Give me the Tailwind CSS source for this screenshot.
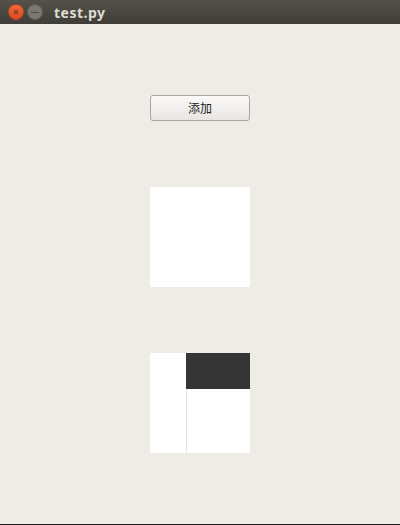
<!DOCTYPE html>
<html>
<head>
<meta charset="utf-8">
<script src="https://cdn.jsdelivr.net/npm/@tailwindcss/browser@4"></script>
</head>
<body class="w-[400px] h-[525px] overflow-hidden bg-[#efebe7] font-['Liberation_Sans','Noto_Sans_CJK_SC',sans-serif]">
<div class="flex flex-col h-[525px]">
  <header class="flex items-center h-6 shrink-0 bg-gradient-to-b from-[#545148] to-[#3e3d38] pl-2">
    <div class="flex items-center justify-center w-4 h-4 rounded-full bg-gradient-to-b from-[#f0683c] to-[#dc4a20] border border-[#8a3a1e]/60">
      <svg width="6" height="6" viewBox="0 0 6 6"><path d="M1 1L5 5M5 1L1 5" stroke="#7a3a22" stroke-width="1.1"/></svg>
    </div>
    <div class="flex items-center justify-center w-4 h-4 rounded-full bg-[#7a7870] border border-[#4a4944]/60 ml-[3px]">
      <div class="w-[8px] h-px bg-[#4a4944]"></div>
    </div>
    <span class="ml-[11px] text-[14px] font-bold text-[#dfdbd2] font-['Noto_Sans','Liberation_Sans',sans-serif] tracking-[0.5px]">test.py</span>
  </header>
  <main class="flex-1 flex flex-col items-center">
    <button class="mt-[71px] w-[100px] h-[26px] rounded-[3px] border border-[#aba69f] bg-gradient-to-b from-[#fbfaf9] to-[#e9e6e2] text-[12px] text-[#1c1c1c] flex items-center justify-center pt-px">添加</button>
    <div class="mt-[66px] w-[100px] h-[100px] bg-white"></div>
    <div class="mt-[66px] w-[100px] h-[100px] bg-white grid grid-cols-[36px_64px] grid-rows-[36px_64px]">
      <div></div>
      <div class="bg-[#353535]"></div>
      <div></div>
      <div class="border-l border-[#e3e3e3]"></div>
    </div>
  </main>
  <div class="h-px shrink-0 bg-[#1a1a1a]"></div>
</div>
</body>
</html>
